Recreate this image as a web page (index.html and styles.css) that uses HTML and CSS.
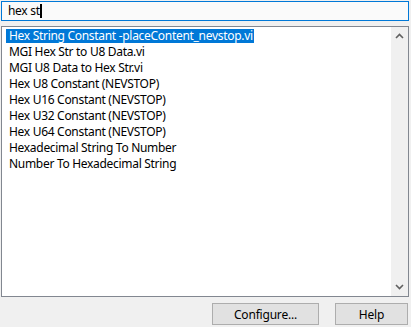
FILE: index.html
```html
<!DOCTYPE html>
<html lang="en">
<head>
    <meta charset="UTF-8">
    <title>Quick Drop</title>
    <link rel="stylesheet" href="styles.css">
</head>
<body>
    <div class="search">
        <span class="query">hex st</span><span class="caret"></span>
    </div>

    <div class="list">
        <ul class="items">
            <li><span class="selected">Hex String Constant -placeContent_nevstop.vi</span></li>
            <li>MGI Hex Str to U8 Data.vi</li>
            <li>MGI U8 Data to Hex Str.vi</li>
            <li>Hex U8 Constant (NEVSTOP)</li>
            <li>Hex U16 Constant (NEVSTOP)</li>
            <li>Hex U32 Constant (NEVSTOP)</li>
            <li>Hex U64 Constant (NEVSTOP)</li>
            <li>Hexadecimal String To Number</li>
            <li>Number To Hexadecimal String</li>
        </ul>
        <div class="scrollbar">
            <svg class="arrow" width="9" height="6" viewBox="0 0 9 6"><path d="M1 5 L4.5 1.5 L8 5" fill="none" stroke="#606060" stroke-width="1.6"/></svg>
            <svg class="arrow" width="9" height="6" viewBox="0 0 9 6"><path d="M1 1 L4.5 4.5 L8 1" fill="none" stroke="#606060" stroke-width="1.6"/></svg>
        </div>
    </div>

    <div class="buttons">
        <button class="btn btn-configure">Configure...</button>
        <button class="btn btn-help">Help</button>
    </div>
</body>
</html>
```

FILE: styles.css
```css
body {
    margin: 0;
    background-color: #f0f0f0;
    font-family: "Noto Sans", "Open Sans", sans-serif;
    font-size: 12px;
    letter-spacing: -0.3px;
    color: #000;
    width: 411px;
    height: 327px;
    overflow: hidden;
}
.search {
    margin: 1px 2px 0 1px;
    height: 18px;
    border: 1px solid #0078d7;
    background: #fafafa;
    display: flex;
    align-items: center;
    padding-left: 6px;
}
.query {
    line-height: 14px;
}
.caret {
    display: inline-block;
    width: 2px;
    height: 14px;
    background: #000;
}
.list {
    margin: 5px 2px 0 1px;
    height: 269px;
    border: 1px solid #828790;
    background: #fff;
    display: flex;
}
.items {
    list-style: none;
    margin: 0;
    padding: 2px 0 0 3px;
    flex: 1;
}
.items li {
    height: 16px;
    line-height: 14px;
    padding-left: 4px;
    white-space: nowrap;
}
.selected {
    display: inline-block;
    background: #0078d7;
    color: #fff;
    margin-left: -3px;
    padding: 0 1px 0 3px;
}
.scrollbar {
    width: 17px;
    background: #f0f0f0;
    display: flex;
    flex-direction: column;
    justify-content: space-between;
    align-items: center;
    padding: 6px 0 6px;
}
.buttons {
    display: flex;
    justify-content: flex-end;
    gap: 16px;
    margin-top: 6px;
    padding-right: 3px;
}
.btn {
    height: 22px;
    border: 1px solid #adadad;
    background: #e1e1e1;
    font-family: "Noto Sans", "Open Sans", sans-serif;
    font-size: 12px;
    letter-spacing: -0.2px;
    color: #000;
    padding: 0;
}
.btn-configure {
    width: 107px;
}
.btn-help {
    width: 73px;
}
```
